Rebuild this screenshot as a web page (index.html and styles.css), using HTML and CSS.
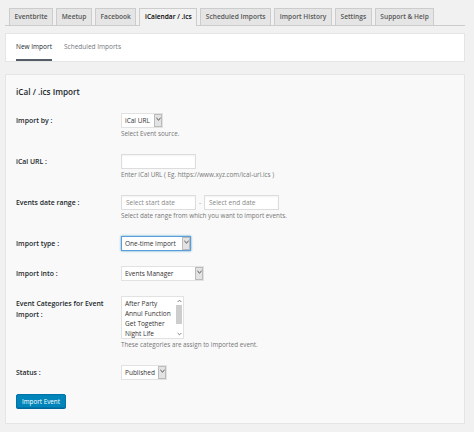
FILE: index.html
```html
<!DOCTYPE html>
<html>
<head>
<meta charset="utf-8">
<link rel="stylesheet" href="styles.css">
</head>
<body>
<div class="wrap">
  <div class="nav-tabs">
    <span class="tab">Eventbrite</span>
    <span class="tab">Meetup</span>
    <span class="tab">Facebook</span>
    <span class="tab active">iCalendar / .ics</span>
    <span class="tab">Scheduled Imports</span>
    <span class="tab">Import History</span>
    <span class="tab">Settings</span>
    <span class="tab">Support &amp; Help</span>
  </div>

  <div class="subnav">
    <span class="subtab current">New Import</span>
    <span class="subtab">Scheduled Imports</span>
  </div>

  <div class="panel">
    <h2 class="title">iCal / .ics Import</h2>

    <div class="row">
      <div class="label">Import by :</div>
      <div class="field">
        <span class="select w-icalurl"><span class="sel-text">iCal URL</span><span class="arrow"><svg viewBox="0 0 6 4" width="5" height="4"><path d="M0.5 0.8 L3 3.2 L5.5 0.8" fill="none" stroke="#333" stroke-width="1.1"/></svg></span></span>
        <div class="desc">Select Event source.</div>
      </div>
    </div>

    <div class="row">
      <div class="label">iCal URL :</div>
      <div class="field">
        <span class="input w-url"></span>
        <div class="desc">Enter iCal URL ( Eg. https://www.xyz.com/ical-url.ics )</div>
      </div>
    </div>

    <div class="row">
      <div class="label">Events date range :</div>
      <div class="field">
        <div class="dates">
          <span class="input w-url placeholder">Select start date</span>
          <span class="dash">-</span>
          <span class="input w-url placeholder">Select end date</span>
        </div>
        <div class="desc">Select date range from which you want to import events.</div>
      </div>
    </div>

    <div class="row">
      <div class="label">Import type :</div>
      <div class="field">
        <span class="select focus w-type"><span class="sel-text">One-time Import</span><span class="arrow"><svg viewBox="0 0 6 4" width="5" height="4"><path d="M0.5 0.8 L3 3.2 L5.5 0.8" fill="none" stroke="#333" stroke-width="1.1"/></svg></span></span>
      </div>
    </div>

    <div class="row">
      <div class="label">Import into :</div>
      <div class="field">
        <span class="select w-into"><span class="sel-text">Events Manager</span><span class="arrow"><svg viewBox="0 0 6 4" width="5" height="4"><path d="M0.5 0.8 L3 3.2 L5.5 0.8" fill="none" stroke="#333" stroke-width="1.1"/></svg></span></span>
      </div>
    </div>

    <div class="row">
      <div class="label">Event Categories for Event Import :</div>
      <div class="field">
        <div class="listbox">
          <div class="items">
            <div>After Party</div>
            <div>Annul Function</div>
            <div>Get Together</div>
            <div>Night Life</div>
          </div>
          <div class="scrollbar">
            <svg class="sb-arrow" viewBox="0 0 6 4" width="5" height="4"><path d="M0.8 3.2 L3 1 L5.2 3.2" fill="none" stroke="#666" stroke-width="1"/></svg>
            <div class="thumb"></div>
            <svg class="sb-arrow" viewBox="0 0 6 4" width="5" height="4"><path d="M0.8 0.8 L3 3 L5.2 0.8" fill="none" stroke="#666" stroke-width="1"/></svg>
          </div>
        </div>
        <div class="desc">These categories are assign to imported event.</div>
      </div>
    </div>

    <div class="row">
      <div class="label">Status :</div>
      <div class="field">
        <span class="select w-status"><span class="sel-text">Published</span><span class="arrow"><svg viewBox="0 0 6 4" width="5" height="4"><path d="M0.5 0.8 L3 3.2 L5.5 0.8" fill="none" stroke="#333" stroke-width="1.1"/></svg></span></span>
      </div>
    </div>

    <button class="button">Import Event</button>
  </div>
</div>
</body>
</html>
```

FILE: styles.css
```css
html, body {
  margin: 0;
  padding: 0;
  background: #f1f1f1;
}
body {
  font-family: "Open Sans", "Noto Sans", sans-serif;
  color: #23282d;
}
.wrap {
  margin: 8px 9px 0 5px;
}
.nav-tabs {
  display: flex;
  gap: 3px;
  padding-left: 4px;
  border-bottom: 1px solid #ccc;
  height: 17px;
}
.tab {
  display: block;
  height: 16px;
  line-height: 16px;
  padding: 0 4.6px;
  border: 1px solid #ccc;
  border-bottom: none;
  background: #e5e5e5;
  color: #555;
  font-size: 6.6px;
  font-weight: 600;
  white-space: nowrap;
}
.tab.active {
  background: #f1f1f1;
  color: #000;
  height: 17px;
}
.subnav {
  margin-top: 7px;
  background: #fff;
  border: 1px solid #e5e5e5;
  height: 29px;
  display: flex;
  gap: 12px;
  padding: 0 10px;
  box-sizing: border-box;
}
.subtab {
  display: flex;
  align-items: center;
  height: 25px;
  border-bottom: 2px solid transparent;
  font-size: 6.5px;
  color: #72777c;
}
.subtab.current {
  color: #23282d;
  border-bottom-color: #555d66;
}
.panel {
  margin-top: 12px;
  background: #f9f9f9;
  border: 1px solid #e5e5e5;
  padding: 11px 10px 15px;
}
.title {
  margin: 0 0 7.5px;
  font-size: 8.2px;
  line-height: 12px;
  font-weight: 600;
  color: #23282d;
}
.row {
  display: grid;
  grid-template-columns: 105px 1fr;
  padding: 7.5px 0;
}
.label {
  font-size: 6.9px;
  font-weight: 600;
  line-height: 11px;
  padding-top: 2px;
  padding-right: 6px;
  color: #23282d;
}
.field {
  display: flex;
  flex-direction: column;
  align-items: flex-start;
}
.desc {
  margin-top: 1px;
  font-size: 6.3px;
  line-height: 10px;
  color: #777;
}
.select {
  display: inline-flex;
  align-items: stretch;
  height: 15px;
  box-sizing: border-box;
  border: 1px solid #e2e2e2;
  background: #fff;
  font-size: 6.5px;
  color: #333;
}
.sel-text {
  flex: 1;
  display: flex;
  align-items: center;
  padding-left: 3px;
  white-space: nowrap;
}
.arrow {
  width: 8px;
  box-sizing: border-box;
  border: 1px solid #bbb;
  background: #e3e3e3;
  display: flex;
  justify-content: center;
  align-items: flex-start;
  padding-top: 2px;
}
.select.focus {
  border-color: #5b9dd9;
  box-shadow: 0 0 2px rgba(30, 140, 190, 0.8);
}
.w-icalurl { width: 42px; }
.w-type { width: 70px; }
.w-into { width: 83px; }
.w-status { width: 46px; }
.input {
  display: inline-flex;
  align-items: center;
  height: 15px;
  box-sizing: border-box;
  border: 1px solid #ddd;
  background: #fff;
  box-shadow: inset 0 1px 2px rgba(0, 0, 0, 0.05);
  font-size: 6.5px;
  padding-left: 4px;
}
.w-url { width: 75px; }
.placeholder { color: #888; }
.dates {
  display: flex;
  align-items: center;
}
.dash {
  width: 8px;
  text-align: center;
  font-size: 6.5px;
  color: #999;
}
.listbox {
  display: flex;
  width: 63px;
  height: 43px;
  box-sizing: border-box;
  border: 1px solid #e2e2e2;
  background: #fff;
}
.items {
  flex: 1;
  padding: 2px 0 0 3px;
  font-size: 6.5px;
  line-height: 10px;
  color: #333;
  white-space: nowrap;
  overflow: hidden;
}
.scrollbar {
  width: 8px;
  display: flex;
  flex-direction: column;
  align-items: center;
  background: #fff;
}
.sb-arrow {
  flex: none;
  margin: 2px 0;
}
.thumb {
  flex: none;
  width: 6px;
  height: 19px;
  background: #cdcdcd;
  margin-bottom: auto;
}
.button {
  display: block;
  margin-top: 6.5px;
  height: 14px;
  padding: 0 5px;
  border: 1px solid #0073aa;
  border-radius: 2px;
  background: #0085ba;
  color: #fff;
  font-family: "Open Sans", "Noto Sans", sans-serif;
  font-size: 6.3px;
  box-shadow: 0 1px 0 #006799;
  cursor: pointer;
}
```
